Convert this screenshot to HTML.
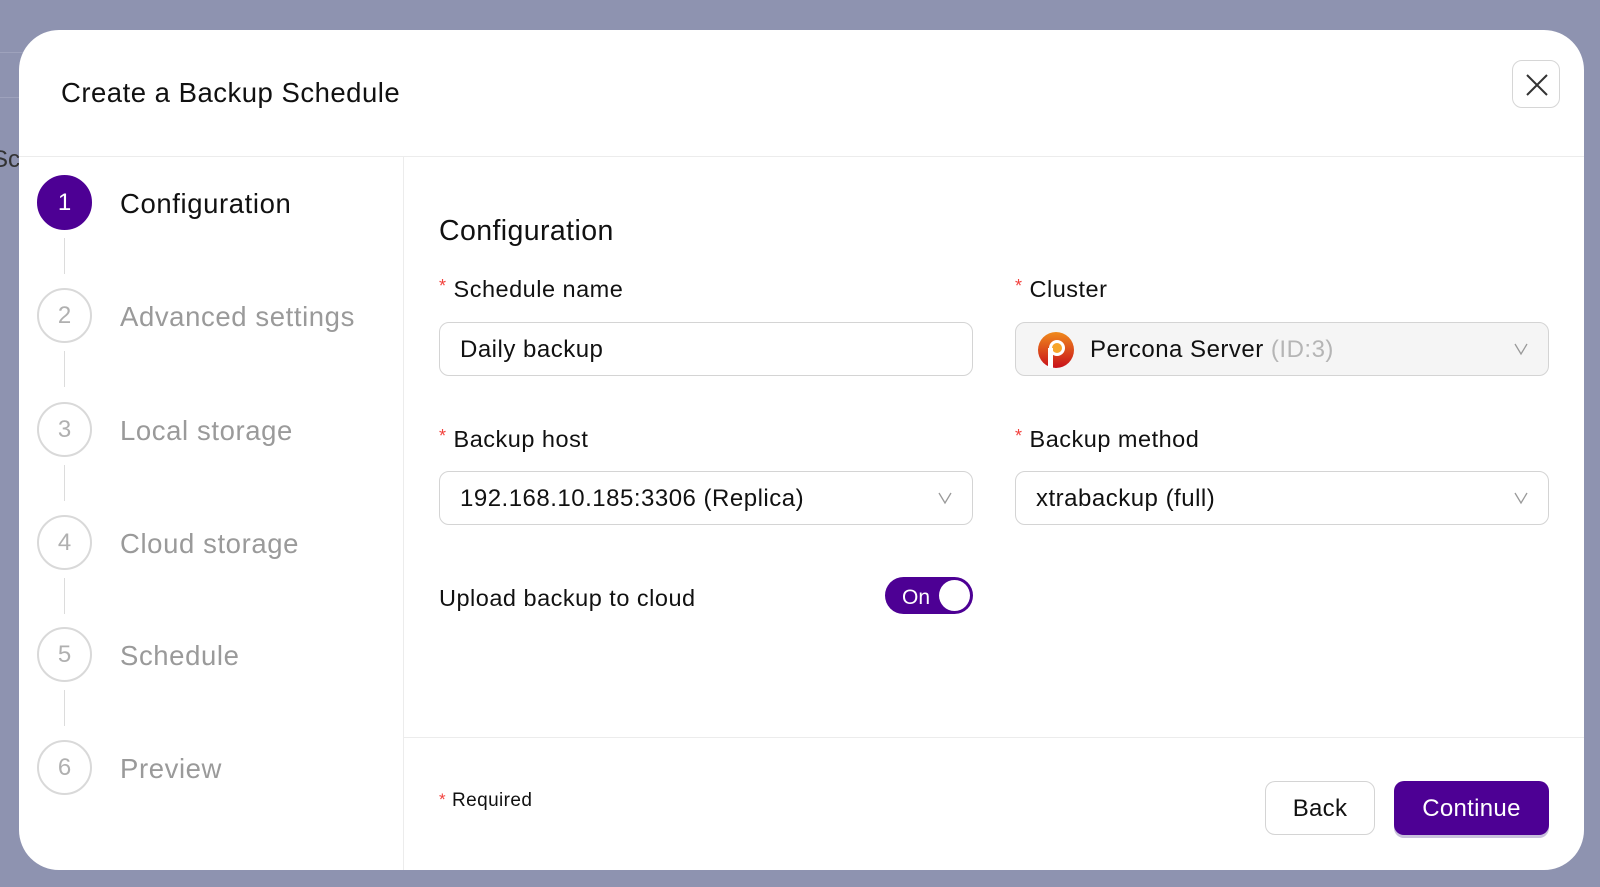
<!DOCTYPE html>
<html><head><style>
*{box-sizing:border-box;margin:0;padding:0}
body{width:1600px;height:887px;background:#8e93b0;font-family:"Liberation Sans",sans-serif;position:relative;overflow:hidden;color:#111}
.bgline{position:absolute;left:0;width:30px;height:1px;background:#9ea2bc}
.modal{position:absolute;left:19px;top:30px;width:1565px;height:840px;background:#fff;border-radius:40px;overflow:hidden}
.abs{position:absolute}
.title{left:42px;top:47px;font-size:27.5px;color:#111;letter-spacing:0.5px}
.close{left:1493px;top:30px;width:48px;height:48px;border:1px solid #d6d6d6;border-radius:10px}
.hline{left:0;top:126px;width:1565px;height:1px;background:#ececec}
.vline{left:384px;top:126px;width:1px;height:714px;background:#ececec}
.fline{left:384px;top:707px;width:1181px;height:1px;background:#ececec}
.circ{width:55px;height:55px;border-radius:50%;border:2px solid #d9d9d9;color:#b0b0b0;font-size:24px;display:flex;align-items:center;justify-content:center;left:18px}
.circ.on{background:#4d0094;border-color:#4d0094;color:#fff}
.conn{left:45px;width:1px;height:36px;background:#dcdcdc}
.step{left:101px;font-size:27.5px;color:#9a9a9a;letter-spacing:0.6px}
.step.on{color:#111}
.h2{left:420px;top:185px;font-size:28.5px;letter-spacing:0.4px}
.lbl{font-size:23.5px;letter-spacing:0.5px}
.lbl b{color:#f2413d;font-weight:normal;font-size:18px;vertical-align:top;margin-right:7px}
.box{height:54px;border:1px solid #d4d4d4;border-radius:10px;font-size:24px;letter-spacing:0.5px;display:flex;align-items:center;padding-left:20px;width:534px;padding-top:2px}
.chev{position:absolute;right:18px;top:17px}
.btn{height:54px;border-radius:10px;font-size:24px;display:flex;align-items:center;justify-content:center;letter-spacing:0.3px;padding-top:2px}
</style></head><body>
<div class="bgline" style="top:52px"></div><div class="bgline" style="top:97px"></div>
<div class="abs" style="left:-8px;top:146px;font-size:24px;color:#333">Sc</div>
<div class="modal">
<div class="abs title">Create a Backup Schedule</div>
<div class="abs close"><svg width="48" height="48" viewBox="0 0 48 48"><path d="M14 14L34 34M34 14L14 34" stroke="#333" stroke-width="2"/></svg></div>
<div class="abs hline"></div><div class="abs vline"></div><div class="abs fline"></div>

<div class="abs circ on" style="top:145px">1</div>
<div class="abs conn" style="top:208px"></div>
<div class="abs circ" style="top:258px">2</div>
<div class="abs conn" style="top:321px"></div>
<div class="abs circ" style="top:372px">3</div>
<div class="abs conn" style="top:435px"></div>
<div class="abs circ" style="top:485px">4</div>
<div class="abs conn" style="top:548px"></div>
<div class="abs circ" style="top:597px">5</div>
<div class="abs conn" style="top:660px"></div>
<div class="abs circ" style="top:710px">6</div>
<div class="abs step on" style="top:158px">Configuration</div>
<div class="abs step" style="top:271px">Advanced settings</div>
<div class="abs step" style="top:385px">Local storage</div>
<div class="abs step" style="top:498px">Cloud storage</div>
<div class="abs step" style="top:610px">Schedule</div>
<div class="abs step" style="top:723px">Preview</div>

<div class="abs h2">Configuration</div>
<div class="abs lbl" style="left:420px;top:246px"><b>*</b>Schedule name</div>
<div class="abs lbl" style="left:996px;top:246px"><b>*</b>Cluster</div>
<div class="abs box" style="left:420px;top:292px">Daily backup</div>
<div class="abs box" style="left:996px;top:292px;background:#f5f5f5">
<svg width="40" height="40" viewBox="0 0 40 40" style="margin-right:14px"><defs><linearGradient id="g" x1="0" y1="0" x2="0" y2="1"><stop offset="0" stop-color="#f08a1c"/><stop offset="1" stop-color="#c8101a"/></linearGradient></defs><circle cx="20" cy="20" r="18" fill="url(#g)"/><circle cx="21" cy="18" r="8" fill="#fff"/><circle cx="21" cy="18" r="5" fill="#f7a52a"/><rect x="12" y="18" width="5" height="20" fill="#fff"/></svg>
Percona Server&nbsp;<span style="color:#b5b5b5">(ID:3)</span>
<svg class="chev" width="18" height="18" viewBox="0 0 18 18"><path d="M3 4L9 14L15 4" fill="none" stroke="#999" stroke-width="1.3"/></svg></div>
<div class="abs lbl" style="left:420px;top:396px"><b>*</b>Backup host</div>
<div class="abs lbl" style="left:996px;top:396px"><b>*</b>Backup method</div>
<div class="abs box" style="left:420px;top:441px">192.168.10.185:3306 (Replica)<svg class="chev" width="18" height="18" viewBox="0 0 18 18"><path d="M3 4L9 14L15 4" fill="none" stroke="#999" stroke-width="1.3"/></svg></div>
<div class="abs box" style="left:996px;top:441px">xtrabackup (full)<svg class="chev" width="18" height="18" viewBox="0 0 18 18"><path d="M3 4L9 14L15 4" fill="none" stroke="#999" stroke-width="1.3"/></svg></div>
<div class="abs lbl" style="left:420px;top:555px">Upload backup to cloud</div>
<div class="abs" style="left:866px;top:547px;width:88px;height:37px;border-radius:19px;background:#4d0094;color:#fff;font-size:21px;padding:9px 0 0 17px">On<div class="abs" style="right:3px;top:3px;width:31px;height:31px;border-radius:50%;background:#fff"></div></div>

<div class="abs" style="left:420px;top:760px;font-size:19px;letter-spacing:0.4px"><span style="color:#f2413d;font-size:17px;vertical-align:top;margin-right:6px">*</span>Required</div>
<div class="abs btn" style="left:1246px;top:751px;width:110px;border:1px solid #d4d4d4">Back</div>
<div class="abs btn" style="left:1375px;top:751px;width:155px;background:#4d0094;color:#fff;box-shadow:0 3px 0 #c8c0dc">Continue</div>
</div>
</body></html>
